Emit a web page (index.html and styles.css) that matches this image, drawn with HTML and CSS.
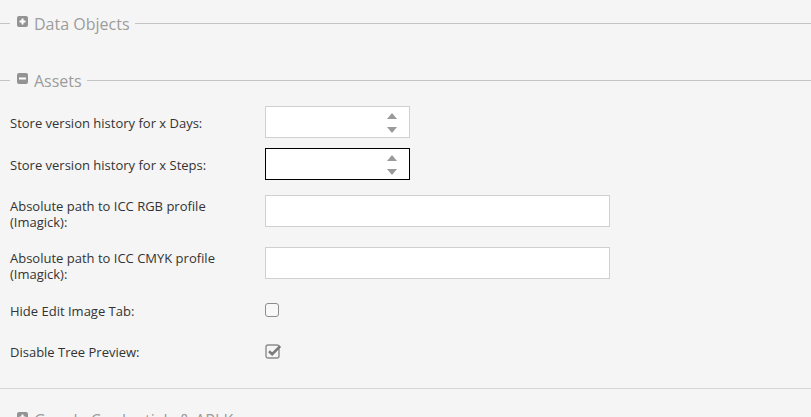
FILE: index.html
```html
<!DOCTYPE html>
<html lang="en">
<head>
<meta charset="utf-8">
<title>Settings</title>
<link rel="stylesheet" href="styles.css">
</head>
<body>
<div class="page">
  <section class="fieldset fieldset--collapsed">
    <div class="legend">
      <span class="legend-line legend-line--lead"></span>
      <svg class="legend-icon" viewBox="0 0 11 11" width="11" height="11"><rect x="0" y="0" width="11" height="11" rx="2" fill="#939393"/><rect x="2.5" y="4.5" width="6" height="2" fill="#fff"/><rect x="4.5" y="2.5" width="2" height="6" fill="#fff"/></svg>
      <span class="legend-text">Data Objects</span>
      <span class="legend-line legend-line--fill"></span>
    </div>
  </section>

  <section class="fieldset fieldset--open">
    <div class="legend">
      <span class="legend-line legend-line--lead"></span>
      <svg class="legend-icon" viewBox="0 0 11 11" width="11" height="11"><rect x="0" y="0" width="11" height="11" rx="2" fill="#939393"/><rect x="2" y="4.5" width="7" height="2" fill="#fff"/></svg>
      <span class="legend-text">Assets</span>
      <span class="legend-line legend-line--fill"></span>
    </div>
    <div class="form">
      <div class="row row--gap10">
        <label class="label">Store version history for x Days:</label>
        <div class="field field--spinner">
          <input class="field-input" type="text">
          <span class="spinner">
            <svg viewBox="0 0 10 6" width="10" height="6"><path d="M0 6 L5 0 L10 6Z" fill="#9a9a9a"/></svg>
            <svg viewBox="0 0 10 6" width="10" height="6"><path d="M0 0 L5 6 L10 0Z" fill="#9a9a9a"/></svg>
          </span>
        </div>
      </div>
      <div class="row row--gap15">
        <label class="label">Store version history for x Steps:</label>
        <div class="field field--spinner field--focus">
          <input class="field-input" type="text">
          <span class="spinner">
            <svg viewBox="0 0 10 6" width="10" height="6"><path d="M0 6 L5 0 L10 6Z" fill="#9a9a9a"/></svg>
            <svg viewBox="0 0 10 6" width="10" height="6"><path d="M0 0 L5 6 L10 0Z" fill="#9a9a9a"/></svg>
          </span>
        </div>
      </div>
      <div class="row row--gap17">
        <label class="label label--multi">Absolute path to ICC RGB profile (Imagick):</label>
        <div class="field field--wide"><input class="field-input" type="text"></div>
      </div>
      <div class="row row--gap17">
        <label class="label label--multi">Absolute path to ICC CMYK profile (Imagick):</label>
        <div class="field field--wide"><input class="field-input" type="text"></div>
      </div>
      <div class="row row--check">
        <label class="label label--check">Hide Edit Image Tab:</label>
        <span class="checkbox"></span>
      </div>
      <div class="row row--check row--last">
        <label class="label label--check">Disable Tree Preview:</label>
        <svg class="checkbox-checked" viewBox="0 0 17 17" width="17" height="17"><rect x="1" y="3" width="13" height="13" rx="2" fill="none" stroke="#8c8c8c" stroke-width="1.4"/><path d="M4 9.2 L7.2 12.2 L15.2 4.2" fill="none" stroke="#7a7a7a" stroke-width="2.6"/></svg>
      </div>
    </div>
  </section>

  <section class="fieldset fieldset--collapsed fieldset--next">
    <div class="legend">
      <span class="legend-line legend-line--lead"></span>
      <svg class="legend-icon" viewBox="0 0 11 11" width="11" height="11"><rect x="0" y="0" width="11" height="11" rx="2" fill="#939393"/><rect x="2.5" y="4.5" width="6" height="2" fill="#fff"/><rect x="4.5" y="2.5" width="2" height="6" fill="#fff"/></svg>
      <span class="legend-text">Google Credentials &amp; API Keys</span>
      <span class="legend-line legend-line--fill"></span>
    </div>
  </section>
</div>
</body>
</html>
```

FILE: styles.css
```css
html, body {
  margin: 0;
  padding: 0;
  background: #f5f5f5;
  overflow: hidden;
}

body {
  font-family: "Open Sans", "Liberation Sans", sans-serif;
  color: #333;
}

.page {
  padding-top: 8px;
}

.fieldset--collapsed {
  margin-bottom: 27px;
}

.fieldset--open {
  border-bottom: 1px solid #d6d6d6;
}

.fieldset--next {
  margin-top: 15px;
}

.legend {
  display: flex;
  align-items: center;
  height: 30px;
}

.legend-line {
  height: 1px;
  background: #c4c4c4;
}

.legend-line--lead {
  width: 10px;
  flex: none;
}

.legend-line--fill {
  flex: 1;
}

.legend-icon {
  flex: none;
  margin-left: 7px;
  margin-bottom: 3px;
}

.legend-text {
  margin-left: 6px;
  margin-right: 5px;
  margin-top: 2px;
  font-size: 16px;
  line-height: 30px;
  color: #9c9c9c;
  white-space: nowrap;
}

.form {
  padding: 11px 0 17px 10px;
}

.row {
  display: flex;
  align-items: flex-start;
}

.row--gap10 { margin-bottom: 10px; }
.row--gap15 { margin-bottom: 15px; }
.row--gap17 { margin-bottom: 16.4px; }

.row--check {
  height: 31px;
  margin-bottom: 10px;
}

.row--last {
  margin-bottom: 0;
}

.label {
  flex: none;
  width: 255px;
  box-sizing: border-box;
  padding-top: 9px;
  padding-right: 10px;
  font-size: 13px;
  line-height: 16px;
  color: #333;
}

.label--multi {
  padding-top: 3px;
  line-height: 16.3px;
}

.label--check {
  padding-top: 4px;
}

.field {
  box-sizing: border-box;
  height: 32px;
  border: 1px solid #d0d0d0;
  background: #fff;
  display: flex;
  align-items: stretch;
}

.field--spinner {
  width: 145px;
}

.field--wide {
  width: 345px;
}

.field--focus {
  border-color: #000;
}

.field-input {
  flex: 1;
  min-width: 0;
  border: 0;
  outline: 0;
  background: transparent;
  padding: 0 8px;
  font: 13px "Open Sans", sans-serif;
}

.spinner {
  flex: none;
  width: 34px;
  display: flex;
  flex-direction: column;
  align-items: center;
  justify-content: space-between;
  padding: 6px 0 4px;
  box-sizing: border-box;
}

.spinner svg {
  display: block;
}

.checkbox {
  display: block;
  flex: none;
  box-sizing: border-box;
  width: 14px;
  height: 14px;
  margin-top: 4px;
  border: 1.5px solid #8c8c8c;
  border-radius: 3px;
  background: #f8f8f8;
}

.checkbox-checked {
  display: block;
  flex: none;
  margin-top: 2px;
}
```
